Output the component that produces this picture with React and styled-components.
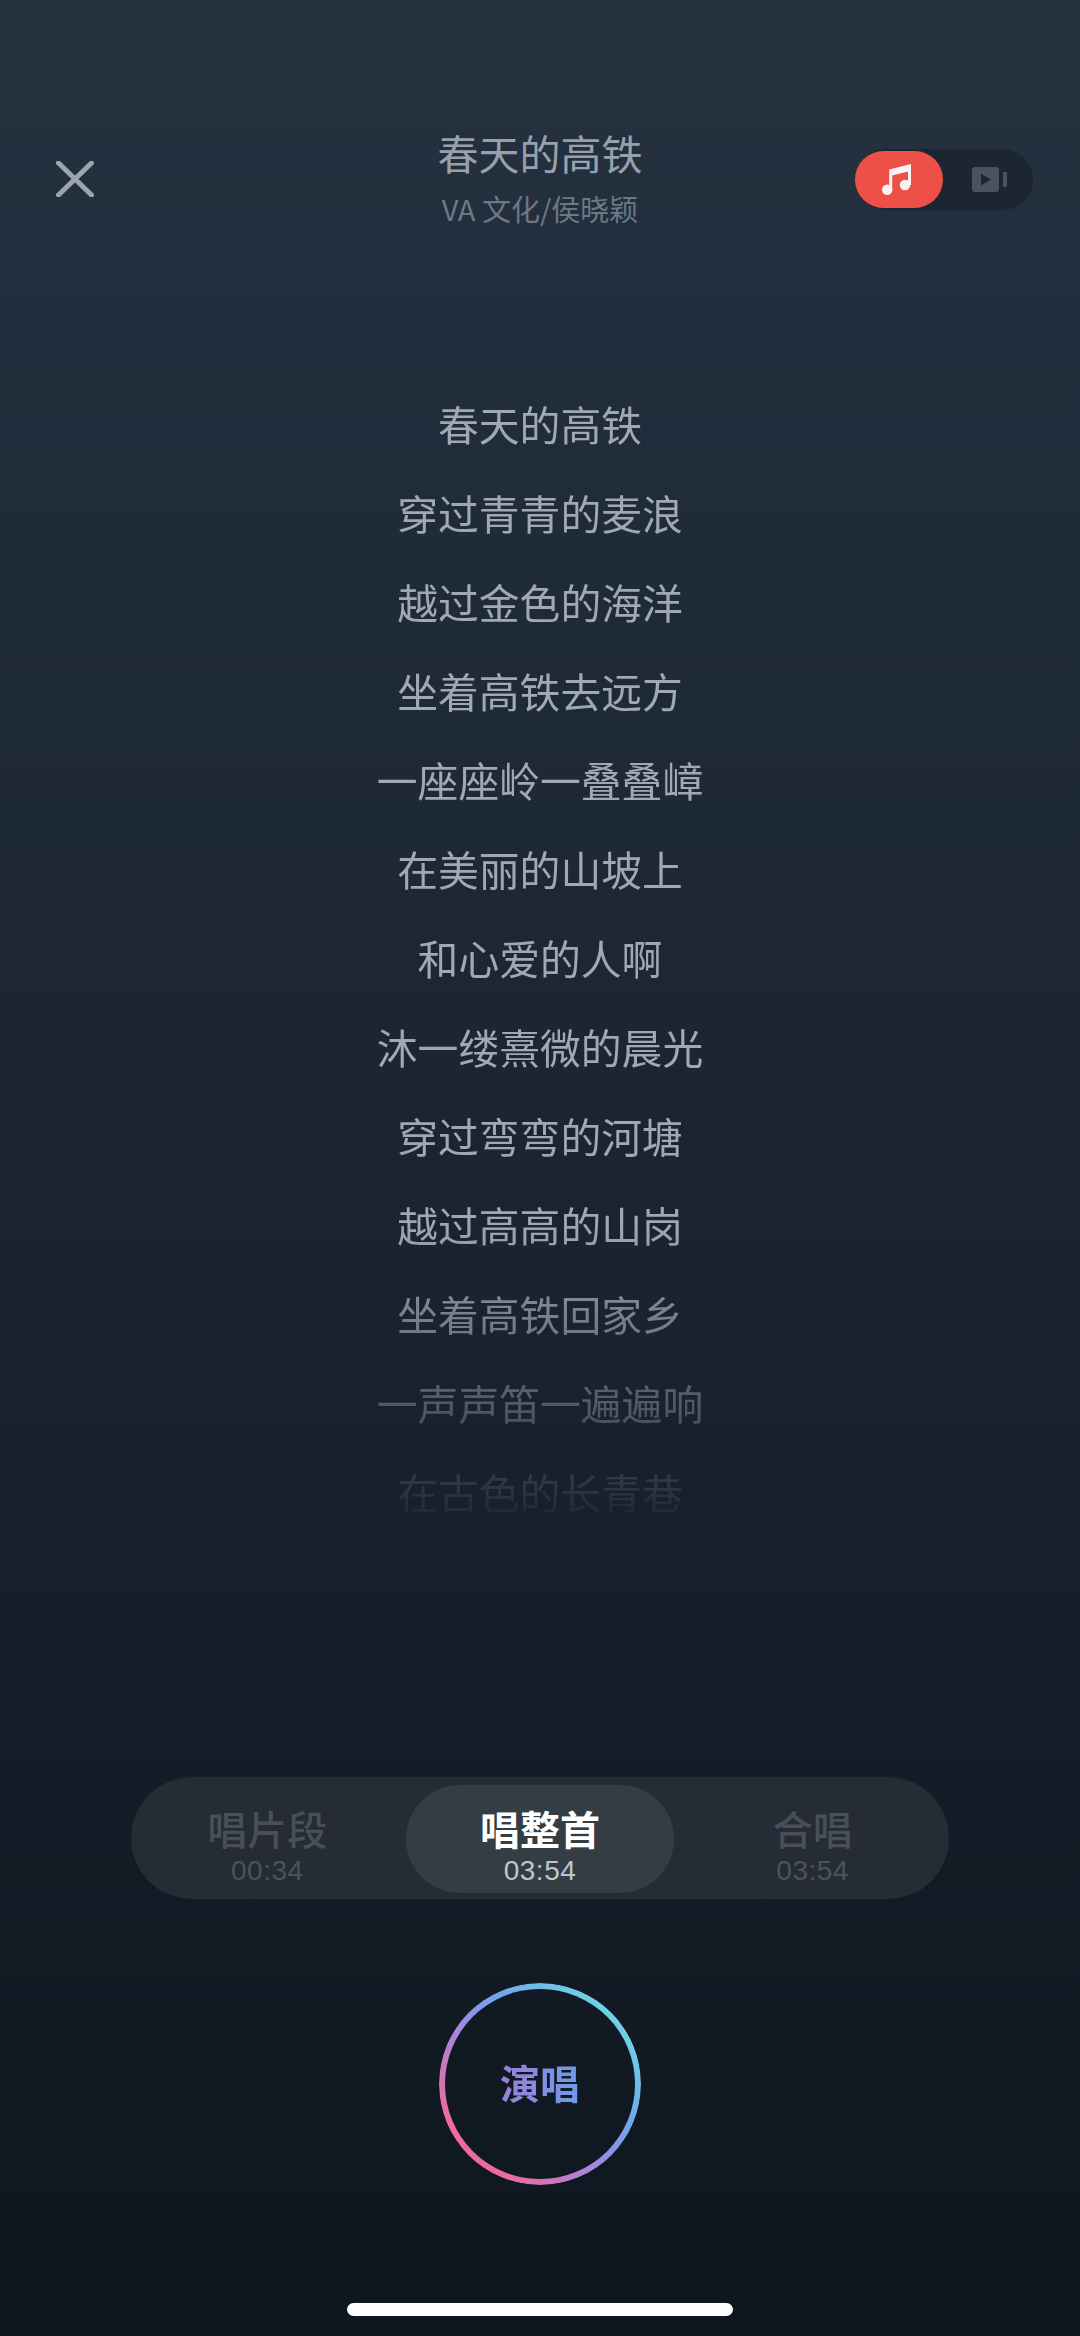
import React from "react";
import styled, { createGlobalStyle } from "styled-components";

const GlobalStyle = createGlobalStyle`
  html, body {
    margin: 0;
    padding: 0;
    background: #0e171f;
  }
  * {
    box-sizing: border-box;
  }
`;

const Page = styled.div`
  width: 1080px;
  height: 2336px;
  overflow: hidden;
  display: flex;
  flex-direction: column;
  align-items: center;
  background: linear-gradient(180deg, #26323f 0%, #222e3d 12%, #1a2330 55%, #141c27 76%, #0e171f 100%);
  font-family: "Noto Sans CJK SC", "Noto Sans", sans-serif;
`;

const Header = styled.header`
  width: 100%;
  margin-top: 130px;
  padding: 0 47px;
  display: grid;
  grid-template-columns: 1fr auto 1fr;
  align-items: center;
`;

const CloseButton = styled.button`
  justify-self: start;
  width: 38px;
  height: 36px;
  margin: 0 0 1px 9px;
  padding: 0;
  border: 0;
  background: none;
  display: flex;
`;

const TitleBlock = styled.div`
  display: flex;
  flex-direction: column;
  align-items: center;
`;

const SongTitle = styled.h1`
  margin: 0;
  font-size: 41px;
  line-height: 44px;
  font-weight: 400;
  color: #98a1ab;
`;

const SongMeta = styled.div`
  margin-top: 15px;
  margin-bottom: 2px;
  font-size: 29px;
  line-height: 38px;
  color: #6c7885;
`;

const ModeToggle = styled.div`
  justify-self: end;
  width: 178px;
  height: 61px;
  border-radius: 31px;
  background: #1c2632;
  display: flex;
  align-items: center;
`;

const ModePill = styled.div`
  width: 88px;
  height: 57px;
  padding-right: 5px;
  border-radius: 29px;
  background: #ee5048;
  display: flex;
  align-items: center;
  justify-content: center;
`;

const VideoCell = styled.div`
  flex: 1;
  display: flex;
  align-items: center;
  padding-left: 29px;
`;

const LyricList = styled.div`
  margin-top: 150px;
  display: flex;
  flex-direction: column;
  align-items: center;
  mask-image: linear-gradient(180deg, #000 0%, #000 73%, transparent 100%);
`;

const LyricLine = styled.div`
  height: 89px;
  line-height: 89px;
  font-size: 40.8px;
  color: #a0a8b1;
  white-space: nowrap;
`;

const SegmentBar = styled.div`
  width: 818px;
  height: 122px;
  margin-top: 241px;
  padding: 8px 0 6px;
  border-radius: 61px;
  background: #252c35;
  display: grid;
  grid-template-columns: repeat(3, 1fr);
`;

const Segment = styled.div`
  margin: 0 2px;
  border-radius: 54px;
  background: ${(p) => (p.$active ? "#343d44" : "transparent")};
  display: flex;
  flex-direction: column;
  align-items: center;
`;

const SegmentLabel = styled.div`
  margin-top: 19px;
  font-size: 40px;
  line-height: 48px;
  font-weight: ${(p) => (p.$active ? 700 : 500)};
  color: ${(p) => (p.$active ? "#ffffff" : "#484f58")};
`;

const SegmentTime = styled.div`
  margin-top: 4px;
  font-family: "Liberation Sans", Arial, sans-serif;
  font-size: 28px;
  line-height: 30px;
  letter-spacing: 0.5px;
  color: ${(p) => (p.$active ? "#bfc5cb" : "#4b525b")};
`;

const SingButton = styled.button`
  position: relative;
  width: 202px;
  height: 202px;
  margin-top: 84px;
  padding: 0 0 5px;
  border: 0;
  border-radius: 50%;
  background: none;
  display: flex;
  align-items: center;
  justify-content: center;

  /* gradient ring, the middle is cut out with a mask */
  &::before {
    content: "";
    position: absolute;
    inset: 0;
    border-radius: 50%;
    padding: 6px;
    background: linear-gradient(225deg, #6fd3e6 14%, #6fa6e8 38%, #9a8ae6 54%, #ee6a9e 82%);
    mask: linear-gradient(#000 0 0) content-box exclude, linear-gradient(#000 0 0);
  }
`;

const SingLabel = styled.span`
  font-family: "Noto Sans CJK SC", sans-serif;
  font-size: 40px;
  line-height: 48px;
  font-weight: 700;
  background: linear-gradient(90deg, #9a7fd6, #6d9be8);
  -webkit-background-clip: text;
  background-clip: text;
  color: transparent;
`;

const HomeBar = styled.div`
  width: 386px;
  height: 13px;
  margin-top: 118px;
  border-radius: 7px;
  background: #ffffff;
`;

const CloseIcon = () => (
  <svg width="38" height="36" viewBox="0 0 38 36" fill="none">
    <path d="M2.5 2 35.5 34M35.5 2 2.5 34" stroke="#9aa5af" strokeWidth="5" strokeLinecap="round" />
  </svg>
);

const MusicIcon = () => (
  <svg width="29" height="31" viewBox="0 0 29 31" fill="#fbf3f2">
    <circle cx="5.2" cy="25.8" r="5.2" />
    <circle cx="23" cy="21" r="5.2" />
    <path d="M7.2 25.8V5.4L29 0v21h-3V7.6L10.2 11.4v14.4z" />
  </svg>
);

const VideoIcon = () => (
  <svg width="36" height="25" viewBox="0 0 36 25">
    <rect width="27" height="25" rx="3" fill="#4a525d" />
    <path d="M9 6.5 19 12.5 9 18.5z" fill="#1e2731" />
    <rect x="31" y="5" width="4" height="15" rx="1" fill="#4a525d" />
  </svg>
);

const lyrics = [
  "春天的高铁",
  "穿过青青的麦浪",
  "越过金色的海洋",
  "坐着高铁去远方",
  "一座座岭一叠叠嶂",
  "在美丽的山坡上",
  "和心爱的人啊",
  "沐一缕熹微的晨光",
  "穿过弯弯的河塘",
  "越过高高的山岗",
  "坐着高铁回家乡",
  "一声声笛一遍遍响",
  "在古色的长青巷",
];

const segments = [
  { label: "唱片段", time: "00:34" },
  { label: "唱整首", time: "03:54", active: true },
  { label: "合唱", time: "03:54" },
];

export default function App() {
  return (
    <>
      <GlobalStyle />
      <Page>
        <Header>
          <CloseButton>
            <CloseIcon />
          </CloseButton>
          <TitleBlock>
            <SongTitle>春天的高铁</SongTitle>
            <SongMeta>VA 文化/侯晓颖</SongMeta>
          </TitleBlock>
          <ModeToggle>
            <ModePill>
              <MusicIcon />
            </ModePill>
            <VideoCell>
              <VideoIcon />
            </VideoCell>
          </ModeToggle>
        </Header>

        <LyricList>
          {lyrics.map((line) => (
            <LyricLine key={line}>{line}</LyricLine>
          ))}
        </LyricList>

        <SegmentBar>
          {segments.map((s) => (
            <Segment key={s.label} $active={s.active}>
              <SegmentLabel $active={s.active}>{s.label}</SegmentLabel>
              <SegmentTime $active={s.active}>{s.time}</SegmentTime>
            </Segment>
          ))}
        </SegmentBar>

        <SingButton>
          <SingLabel>演唱</SingLabel>
        </SingButton>

        <HomeBar />
      </Page>
    </>
  );
}
